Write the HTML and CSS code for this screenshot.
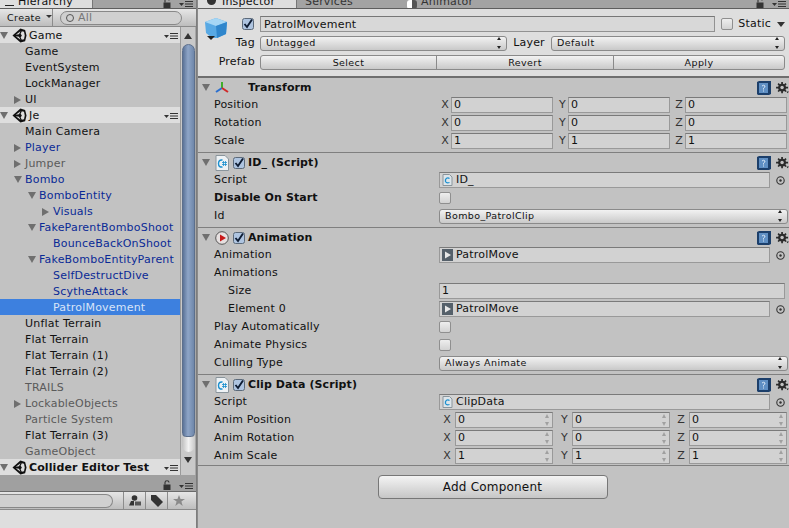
FILE: index.html
```html
<!DOCTYPE html>
<html lang="en">
<head>
<meta charset="utf-8">
<title>Unity Inspector</title>
<link rel="stylesheet" href="styles.css">
</head>
<body>
<svg class="defs" width="0" height="0">
  <defs>
    <symbol id="unity" viewBox="0 0 16 16">
      <path d="M9 .5 14 2 15.500 8 14 14 9 15.500 .5 8ZM4 7.200 9 3.500 7.500 6.700ZM4 8.800 7.500 9.300 9 12.500ZM9.200 6 10.500 3.500 12.800 4 13.600 8 12.800 12 10.500 12.500 9.200 10 10.500 8Z" fill="#111" fill-rule="evenodd"/>
    </symbol>
    <symbol id="menu" viewBox="0 0 14 8">
      <path d="M0 3h5L2.500 6Z" fill="#333"/><path d="M6 1h8v1H6zM6 3.500h8v1H6zM6 6h8v1H6z" fill="#333"/>
    </symbol>
    <symbol id="help" viewBox="0 0 14 14">
      <path d="M0 1 2 0h12v13l-2 1H1l-1-1Z" fill="#1c3f6b"/><path d="M2 2h9v10H2Z" fill="#5f8fc4"/><path d="M5 5Q6.500 3.500 8 5 8 6.500 6.500 7.200v1.300M6.500 9.500v1" stroke="#d8e6f5" fill="none"/>
    </symbol>
    <symbol id="gear" viewBox="0 0 15 14">
      <path d="M6 0h2v2l1.500.6L11 1.200 12.300 2.500 11 4l.6 1.500H14v2h-2.400L11 9l1.300 1.500L11 11.800 9.500 10.500 8 11v2H6v-2l-1.500-.5L3 11.800 1.700 10.500 3 9l-.6-1.500H0v-2h2.400L3 4 1.700 2.500 3 1.200 4.500 2.600 6 2Z" fill="#2a2a2a"/><circle cx="7" cy="6.500" r="2" fill="#c2c2c2"/><path d="M12 11h3l-1.500 2Z" fill="#2a2a2a"/>
    </symbol>
    <symbol id="cs" viewBox="0 0 14 16">
      <path d="M1 .5h9l3.500 3.500v11.500H1Z" fill="#eef2f5" stroke="#8a959c"/><path d="M7.500 5Q3.500 4.500 3.500 8.500 3.500 12.500 7.500 12" fill="none" stroke="#1b8fce" stroke-width="1.400"/><path d="M7 7.500h5M7 9.500h5M8.500 6v5M10.500 6v5" stroke="#1b8fce" stroke-width=".8"/>
    </symbol>
    <symbol id="cs-small" viewBox="0 0 11 12">
      <path d="M1 .5h6.500L10 3v8.500H1Z" fill="#dde5ea" stroke="#8a959c"/><path d="M7.500 4.500Q6 3.500 4.500 4.300 3 5.500 3.500 7.500 4.500 9.500 7.500 8.500" fill="none" stroke="#1b8fce" stroke-width="1.300"/>
    </symbol>
    <symbol id="clip" viewBox="0 0 11 12">
      <path d="M0 0h11v12H0Z" fill="#55606a"/><path d="M3 2.500 9 6 3 9.500Z" fill="#e8e8e8"/>
    </symbol>
    <symbol id="target" viewBox="0 0 9 9">
      <circle cx="4.500" cy="4.500" r="3.700" fill="none" stroke="#333" stroke-width="1.100"/><circle cx="4.500" cy="4.500" r="1.200" fill="#333"/>
    </symbol>
    <symbol id="lock" viewBox="0 0 8 10">
      <path d="M.5 4.500h7V10h-7Z" fill="#333"/><path d="M2 4.500V2.500Q2 .7 4 .7 6 .7 6 2.500" fill="none" stroke="#333" stroke-width="1.100"/>
    </symbol>
    <symbol id="check" viewBox="0 0 12 12">
      <rect x=".5" y=".5" width="11" height="11" rx="2" fill="#aec4e0" stroke="#5c6a7a"/><path d="M2.500 6 5 9 10 1.500" fill="none" stroke="#0e1c33" stroke-width="1.900"/>
    </symbol>
  </defs>
</svg>

<div class="app">
  <aside class="left">
    <div class="tabbar">
      <div class="tab tab-hier"><span class="list-ic"></span><span>Hierarchy</span></div>
      <div class="tab-tools"><svg class="ic-lock"><use href="#lock"/></svg><svg class="ic-menu"><use href="#menu"/></svg></div>
    </div>
    <div class="toolbar">
      <div class="create">Create <span class="caret"></span></div>
      <div class="search"><span class="lens"></span><span class="search-hint">All</span></div>
    </div>
    <div class="hier">
      <div class="tree">
        <div class="scene"><span class="arr down"></span><svg class="ic-unity"><use href="#unity"/></svg><span class="grow">Game</span><svg class="ic-menu"><use href="#menu"/></svg></div>
        <div class="row d0"><span class="slot"></span>Game</div>
        <div class="row d0"><span class="slot"></span>EventSystem</div>
        <div class="row d0"><span class="slot"></span>LockManager</div>
        <div class="row d0"><span class="slot"><span class="arr"></span></span>UI</div>
        <div class="scene"><span class="arr down"></span><svg class="ic-unity"><use href="#unity"/></svg><span class="grow">Je</span><svg class="ic-menu"><use href="#menu"/></svg></div>
        <div class="row d0"><span class="slot"></span>Main Camera</div>
        <div class="row d0 pre"><span class="slot"><span class="arr"></span></span>Player</div>
        <div class="row d0 off"><span class="slot"><span class="arr"></span></span>Jumper</div>
        <div class="row d0 pre"><span class="slot"><span class="arr down"></span></span>Bombo</div>
        <div class="row d1 pre"><span class="slot"><span class="arr down"></span></span>BomboEntity</div>
        <div class="row d2 pre"><span class="slot"><span class="arr"></span></span>Visuals</div>
        <div class="row d1 pre"><span class="slot"><span class="arr down"></span></span>FakeParentBomboShoot</div>
        <div class="row d2 pre"><span class="slot"></span>BounceBackOnShoot</div>
        <div class="row d1 pre"><span class="slot"><span class="arr down"></span></span>FakeBomboEntityParent</div>
        <div class="row d2 pre"><span class="slot"></span>SelfDestructDive</div>
        <div class="row d2 pre"><span class="slot"></span>ScytheAttack</div>
        <div class="row d2 sel"><span class="slot"></span>PatrolMovement</div>
        <div class="row d0"><span class="slot"></span>Unflat Terrain</div>
        <div class="row d0"><span class="slot"></span>Flat Terrain</div>
        <div class="row d0"><span class="slot"></span>Flat Terrain (1)</div>
        <div class="row d0"><span class="slot"></span>Flat Terrain (2)</div>
        <div class="row d0 off"><span class="slot"></span>TRAILS</div>
        <div class="row d0 off"><span class="slot"><span class="arr"></span></span>LockableObjects</div>
        <div class="row d0 off"><span class="slot"></span>Particle System</div>
        <div class="row d0"><span class="slot"></span>Flat Terrain (3)</div>
        <div class="row d0 off"><span class="slot"></span>GameObject</div>
        <div class="scene strong"><span class="arr down"></span><svg class="ic-unity"><use href="#unity"/></svg><span class="grow">Collider Editor Test</span><svg class="ic-menu"><use href="#menu"/></svg></div>
      </div>
      <div class="scroll">
        <span class="sc-up"></span>
        <div class="thumb"></div>
        <div class="thumb-end"></div>
        <span class="sc-down"></span>
      </div>
    </div>
    <div class="tabbar tabbar-low">
      <div class="tab-tools"><svg class="ic-lock"><use href="#lock"/></svg><svg class="ic-menu"><use href="#menu"/></svg></div>
    </div>
    <div class="toolbar toolbar-low">
      <div class="search search-low"></div>
      <div class="tool-btn"><svg width="12" height="11" viewBox="0 0 12 11"><circle cx="5.500" cy="3" r="2.800" fill="#333"/><path d="M0 10.500 2 6h3v4.500Z" fill="#333"/><rect x="6" y="6.500" width="6" height="4" fill="#555"/></svg></div>
      <div class="tool-btn"><svg width="12" height="12" viewBox="0 0 12 12"><path d="M0 0h5l7 7-5 5-7-7Z" fill="#333"/></svg></div>
      <div class="tool-btn"><svg width="12" height="11" viewBox="0 0 12 11"><path d="M6 0 7.500 4H12L8.400 6.500 9.700 11 6 8.200 2.300 11 3.600 6.500 0 4H4.500Z" fill="#8a8a8a"/></svg></div>
    </div>
    <div class="left-foot"></div>
  </aside>

  <main class="right">
    <div class="tabbar">
      <div class="tab tab-insp"><span class="info-ic"></span><span>Inspector</span></div>
      <div class="tab tab-serv"><span>Services</span></div>
      <div class="tab tab-anim"><span class="anim-ic"></span><span>Animator</span></div>
      <div class="tab-tools"><svg class="ic-lock"><use href="#lock"/></svg><svg class="ic-menu"><use href="#menu"/></svg></div>
    </div>

    <header class="obj">
      <svg class="cube" width="24" height="24" viewBox="0 0 24 24">
        <path d="M1 5 12 1 23 5 22 17 13 21 8 21 2 16Z" fill="#58a9e4"/>
        <path d="M1 5 12 1 23 5 12 9Z" fill="#a5d6f5"/>
        <path d="M12 9 23 5 22 17 13 21Z" fill="#2f86cc"/>
        <path d="M3 19h8l-4 4Z" fill="#222"/>
      </svg>
      <div class="obj-rows">
        <div class="obj-row">
          <svg class="cb"><use href="#check"/></svg>
          <div class="name-field">PatrolMovement</div>
          <span class="box static-box"></span>
          <span class="static">Static</span>
          <span class="static-arr"></span>
        </div>
        <div class="obj-row">
          <span class="obj-lab">Tag</span>
          <div class="popup tag-pop">Untagged<span class="updown"></span></div>
          <span class="layer-lab">Layer</span>
          <div class="popup layer-pop">Default<span class="updown"></span></div>
        </div>
        <div class="obj-row">
          <span class="obj-lab">Prefab</span>
          <div class="btn-group">
            <div class="seg seg-a">Select</div>
            <div class="seg seg-b">Revert</div>
            <div class="seg seg-c">Apply</div>
          </div>
        </div>
      </div>
    </header>

    <section class="comp">
      <div class="comp-head">
        <span class="arr down"></span>
        <svg class="comp-ic" width="14" height="14" viewBox="0 0 14 14"><path d="M7 7V1" stroke="#3fae2a" stroke-width="2"/><path d="M7 7 1 11" stroke="#2a6fd0" stroke-width="2"/><path d="M7 7l6 4" stroke="#d02a2a" stroke-width="2"/></svg>
        <span class="comp-title tf-title">Transform</span>
        <svg class="ic-help"><use href="#help"/></svg><svg class="ic-gear"><use href="#gear"/></svg>
      </div>
      <div class="prop"><span class="lab">Position</span><div class="vec"><span class="ax">X</span><span class="fld">0</span><span class="ax">Y</span><span class="fld">0</span><span class="ax">Z</span><span class="fld">0</span></div></div>
      <div class="prop"><span class="lab">Rotation</span><div class="vec"><span class="ax">X</span><span class="fld">0</span><span class="ax">Y</span><span class="fld">0</span><span class="ax">Z</span><span class="fld">0</span></div></div>
      <div class="prop"><span class="lab">Scale</span><div class="vec"><span class="ax">X</span><span class="fld">1</span><span class="ax">Y</span><span class="fld">1</span><span class="ax">Z</span><span class="fld">1</span></div></div>
    </section>

    <section class="comp">
      <div class="comp-head">
        <span class="arr down"></span>
        <svg class="comp-ic" width="14" height="16"><use href="#cs"/></svg>
        <svg class="cb"><use href="#check"/></svg>
        <span class="comp-title">ID_ (Script)</span>
        <svg class="ic-help"><use href="#help"/></svg><svg class="ic-gear"><use href="#gear"/></svg>
      </div>
      <div class="prop"><span class="lab">Script</span><div class="obj-field"><svg class="ref-ic"><use href="#cs-small"/></svg>ID_</div><svg class="ic-target"><use href="#target"/></svg></div>
      <div class="prop"><span class="lab bold">Disable On Start</span><span class="box"></span></div>
      <div class="prop"><span class="lab">Id</span><div class="popup wide-pop">Bombo_PatrolClip<span class="updown"></span></div></div>
    </section>

    <section class="comp">
      <div class="comp-head">
        <span class="arr down"></span>
        <svg class="comp-ic" width="14" height="14" viewBox="0 0 14 14"><circle cx="7" cy="7" r="6.300" fill="#e6e0e0" stroke="#555"/><path d="M5 3.500 11 7 5 10.500Z" fill="#c81818"/></svg>
        <svg class="cb"><use href="#check"/></svg>
        <span class="comp-title">Animation</span>
        <svg class="ic-help"><use href="#help"/></svg><svg class="ic-gear"><use href="#gear"/></svg>
      </div>
      <div class="prop"><span class="lab">Animation</span><div class="obj-field"><svg class="ref-ic"><use href="#clip"/></svg>PatrolMove</div><svg class="ic-target"><use href="#target"/></svg></div>
      <div class="prop"><span class="lab">Animations</span></div>
      <div class="prop"><span class="lab sub">Size</span><div class="plain-field">1</div></div>
      <div class="prop"><span class="lab sub">Element 0</span><div class="obj-field"><svg class="ref-ic"><use href="#clip"/></svg>PatrolMove</div><svg class="ic-target"><use href="#target"/></svg></div>
      <div class="prop"><span class="lab">Play Automatically</span><span class="box"></span></div>
      <div class="prop"><span class="lab">Animate Physics</span><span class="box"></span></div>
      <div class="prop"><span class="lab">Culling Type</span><div class="popup wide-pop">Always Animate<span class="updown"></span></div></div>
    </section>

    <section class="comp comp-last">
      <div class="comp-head">
        <span class="arr down"></span>
        <svg class="comp-ic" width="14" height="16"><use href="#cs"/></svg>
        <svg class="cb"><use href="#check"/></svg>
        <span class="comp-title">Clip Data (Script)</span>
        <svg class="ic-help"><use href="#help"/></svg><svg class="ic-gear"><use href="#gear"/></svg>
      </div>
      <div class="prop"><span class="lab">Script</span><div class="obj-field"><svg class="ref-ic"><use href="#cs-small"/></svg>ClipData</div><svg class="ic-target"><use href="#target"/></svg></div>
      <div class="prop"><span class="lab">Anim Position</span><div class="vec spin"><span class="ax">X</span><span class="fld">0<i class="spinner"></i></span><span class="ax">Y</span><span class="fld">0<i class="spinner"></i></span><span class="ax">Z</span><span class="fld">0<i class="spinner"></i></span></div></div>
      <div class="prop"><span class="lab">Anim Rotation</span><div class="vec spin"><span class="ax">X</span><span class="fld">0<i class="spinner"></i></span><span class="ax">Y</span><span class="fld">0<i class="spinner"></i></span><span class="ax">Z</span><span class="fld">0<i class="spinner"></i></span></div></div>
      <div class="prop"><span class="lab">Anim Scale</span><div class="vec spin"><span class="ax">X</span><span class="fld">1<i class="spinner"></i></span><span class="ax">Y</span><span class="fld">1<i class="spinner"></i></span><span class="ax">Z</span><span class="fld">1<i class="spinner"></i></span></div></div>
    </section>

    <div class="add-area"><div class="add-btn">Add Component</div></div>
  </main>
</div>
</body>
</html>
```

FILE: styles.css
```css
* { box-sizing: border-box; }
html, body { margin: 0; height: 100%; overflow: hidden; }
body {
  font: 11px/16px "DejaVu Sans", "Liberation Sans", sans-serif;
  letter-spacing: .2px;
  color: #111;
  background: #c2c2c2;
}
svg { display: block; flex: none; }
.defs { position: absolute; }
.app { display: flex; height: 528px; }

/* panels */
.left { width: 197px; flex: none; display: flex; flex-direction: column; border-right: 1px solid #7d7d7d; }
.right { flex: 1; min-width: 0; display: flex; flex-direction: column; border-left: 1px solid #8a8a8a; background: #c2c2c2; }

/* tab bars */
.tabbar { height: 9px; flex: none; display: flex; align-items: flex-end; background: #a3a3a3; border-bottom: 1px solid #5e5e5e; overflow: hidden; }
.tab { height: 20px; flex: none; display: flex; align-items: center; padding-top: 2px; margin-bottom: -1px; color: #333; font-size: 11px; }
.tab > span:last-child { position: relative; top: 2px; }
.tab-hier { width: 93px; padding-left: 5px; gap: 4px; background: #dedede; border-right: 1px solid #777; color: #111; }
.tab-insp { width: 99px; padding-left: 9px; gap: 6px; background: #dedede; border-right: 1px solid #777; color: #111; }
.tab-serv { width: 110px; padding-left: 8px; }
.tab-anim { gap: 4px; }
.list-ic { width: 9px; height: 9px; position: relative; top: 1px; border-top: 1px solid #222; border-bottom: 1px solid #222; }
.info-ic { width: 9px; height: 9px; position: relative; top: 0; border-radius: 50%; background: #333; }
.anim-ic { width: 10px; height: 9px; position: relative; top: 4px; border-left: 5px solid #fff; background: #555; border-radius: 3px; }
.tab-tools { margin-left: auto; display: flex; align-items: flex-end; gap: 8px; padding-right: 3px; height: 100%; }
.ic-lock { width: 8px; height: 10px; }
.ic-menu { width: 14px; height: 8px; }
.tabbar-low { height: 17px; background: #a0a0a0; border-bottom: 1px solid #6a6a6a; }
.tabbar-low .tab-tools { padding-bottom: 1px; }

/* toolbars */
.toolbar { height: 18px; flex: none; display: flex; align-items: center; background: linear-gradient(#e6e6e6, #bdbdbd); border-bottom: 1px solid #8a8a8a; }
.create { width: 53px; height: 100%; flex: none; padding-left: 7px; border-right: 1px solid #8c8c8c; line-height: 17px; font-size: 9.500px; letter-spacing: .4px; white-space: nowrap; }
.caret { display: inline-block; margin: 0 0 3px 2px; border: 3px solid transparent; border-top-color: #333; border-bottom: 0; }
.search { width: 122px; height: 14px; margin-left: 7px; display: flex; align-items: center; padding-left: 5px; border: 1px solid #888; border-radius: 8px; background: #d0d0d0; color: #777; }
.lens { width: 8px; height: 8px; border: 1px solid #555; border-radius: 50%; margin-right: 4px; }
.search-hint { font-size: 11px; }
.search-low { width: 113px; margin-left: 0; border-left: 0; border-radius: 0 8px 8px 0; }
.tool-btn { width: 22px; height: 100%; flex: none; display: flex; align-items: center; justify-content: center; border-left: 1px solid #8c8c8c; }
.search-low + .tool-btn { margin-left: 10px; }
.left-foot { flex: 1; background: #dedede; }

/* hierarchy */
.hier { height: 448px; flex: none; display: flex; overflow: hidden; }
.tree { width: 180px; flex: none; }
.row { height: 16px; display: flex; align-items: center; padding-top: 1px; white-space: nowrap; }
.d0 { padding-left: 11px; }
.d1 { padding-left: 25px; }
.d2 { padding-left: 39px; }
.slot { width: 14px; height: 15px; flex: none; display: flex; align-items: center; padding-left: 3px; }
.pre { color: #0a2a96; }
.off { color: #5a5a5a; }
.sel { background: #3d80df; color: #d8e4f8; }
.arr { display: block; flex: none; width: 0; height: 0; border-style: solid; border-width: 4px 0 4px 7px; border-color: transparent transparent transparent #6f6f6f; }
.arr.down { border-width: 7px 4px 0 4px; border-color: #6f6f6f transparent transparent transparent; }
.scene { height: 16px; display: flex; align-items: center; padding-top: 1px; background: #dedede; padding-right: 2px; white-space: nowrap; }
.ic-unity { width: 15px; height: 15px; margin: -1px 2px 0 4px; }
.grow { flex: 1; min-width: 0; }
.strong { font-weight: 700; letter-spacing: .1px; }

/* scrollbar */
.scroll { width: 16px; flex: none; display: flex; flex-direction: column; align-items: center; background: #c9c9c9; border-left: 1px solid #9a9a9a; border-right: 1px solid #a8a8a8; }
.sc-up { margin: 6px 0 5px; border: 4px solid transparent; border-top: 0; border-bottom: 6px solid #333; }
.sc-down { margin-top: 5px; border: 4px solid transparent; border-bottom: 0; border-top: 6px solid #333; }
.thumb { width: 13px; height: 393px; flex: none; border-radius: 7px 7px 4px 4px; background: linear-gradient(90deg, #5b7398, #8ea5c7 45%, #6f87aa); border: 1px solid #5c6f8c; }
.thumb-end { width: 13px; height: 15px; flex: none; border-radius: 0 0 7px 7px; background: linear-gradient(90deg, #c0c0c0, #f2f2f2 50%, #c8c8c8); }

/* object header */
.obj { height: 69px; flex: none; display: flex; background: #dedede; border-bottom: 2px solid #6e6e6e; padding: 7px 4px 0 6px; }
.cube { margin-top: 1px; }
.obj-rows { flex: 1; min-width: 0; margin-left: -18px; display: flex; flex-direction: column; gap: 3px; }
.obj-row { height: 16px; display: flex; align-items: center; }
.cb { width: 12px; height: 12px; }
.obj-row > .cb { margin-left: 32px; }
.name-field { width: 457px; height: 16px; margin-left: 6px; padding-left: 3px; background: #d8d8d8; border: 1px solid #929292; border-top-color: #777; }
.box { width: 12px; height: 12px; flex: none; border: 1px solid #8f8f8f; border-radius: 2px; background: linear-gradient(#eee, #d2d2d2); }
.static-box { margin-left: 6px; }
.static { margin-left: 5px; }
.static-arr { margin-left: 6px; border: 4px solid transparent; border-bottom: 0; border-top: 5px solid #333; }
.obj-lab { width: 44px; text-align: right; margin-left: 1px; margin-right: 5px; flex: none; }
.popup { height: 15px; display: flex; align-items: center; justify-content: space-between; padding: 0 4px 0 5px; border: 1px solid #8a8a8a; border-radius: 3px; background: linear-gradient(#f2f2f2, #c9c9c9); font-size: 9.500px; letter-spacing: .4px; }
.updown { width: 5px; height: 8px; flex: none; position: relative; }
.updown::before, .updown::after { content: ""; position: absolute; left: 0; border: 2.500px solid transparent; }
.updown::before { top: -2px; border-top: 0; border-bottom: 3px solid #222; }
.updown::after { bottom: -2px; border-bottom: 0; border-top: 3px solid #222; }
.tag-pop { width: 247px; }
.layer-lab { width: 44px; flex: none; text-align: center; }
.layer-pop { width: 234px; }
.btn-group { width: 525px; height: 15px; display: flex; border: 1px solid #8a8a8a; border-radius: 3px; background: linear-gradient(#f2f2f2, #c9c9c9); font-size: 9.500px; letter-spacing: .4px; line-height: 13px; text-align: center; }
.seg-a { width: 176px; border-right: 1px solid #8a8a8a; }
.seg-b { width: 177px; border-right: 1px solid #8a8a8a; }
.seg-c { flex: 1; }

/* components */
.comp { flex: none; padding-bottom: 2px; padding-left: 4px; border-bottom: 1px solid #7f7f7f; }
.comp-last { padding-bottom: 0; }
.comp-head { height: 18px; display: flex; align-items: center; padding-top: 1px; }
.comp-ic { margin-left: 5px; }
.comp-head .cb { margin-left: 4px; }
.comp-title { flex: 1; min-width: 0; margin-left: 3px; font-weight: 700; letter-spacing: .1px; }
.tf-title { margin-left: 19px; }
.ic-help { width: 14px; height: 14px; margin-right: 1px; }
.ic-gear { width: 13px; height: 12px; margin-left: 4px; }
.prop { height: 18px; display: flex; align-items: center; padding-left: 12px; }
.lab { width: 225px; flex: none; white-space: nowrap; }
.lab.sub { padding-left: 14px; }
.bold { font-weight: 700; letter-spacing: .1px; }
.obj-field { width: 331px; height: 16px; flex: none; display: flex; align-items: center; padding-left: 2px; gap: 3px; background: #d2d2d2; border: 1px solid #999; border-top-color: #7a7a7a; }
.plain-field { width: 346px; height: 16px; flex: none; padding-left: 2px; line-height: 14px; background: #d2d2d2; border: 1px solid #999; border-top-color: #7a7a7a; }
.ref-ic { width: 11px; height: 12px; }
.ic-target { width: 9px; height: 9px; margin-left: 6px; }
.wide-pop { width: 349px; }
.vec { width: 348px; display: grid; grid-template-columns: 12px 1fr 15px 1fr 15px 1fr; align-items: center; }
.ax { text-align: right; padding-right: 2px; color: #333; }
.fld { height: 16px; min-width: 0; position: relative; padding-left: 2px; line-height: 14px; background: #d2d2d2; border: 1px solid #999; border-top-color: #7a7a7a; }
.spin { grid-template-columns: 16px 1fr 19px 1fr 19px 1fr; }
.spin .ax { padding-right: 4px; }
.spinner { position: absolute; right: 2px; top: 2px; width: 5px; height: 10px; }
.spinner::before, .spinner::after { content: ""; position: absolute; left: 0; border: 2.500px solid transparent; }
.spinner::before { top: -1px; border-top: 0; border-bottom: 4px solid #a0a0a0; }
.spinner::after { bottom: -1px; border-bottom: 0; border-top: 4px solid #a0a0a0; }

/* add component */
.add-area { flex: 1; display: flex; justify-content: center; padding-top: 9px; padding-right: 2px; }
.add-btn { width: 230px; height: 24px; font-size: 12px; line-height: 22px; text-align: center; border: 1px solid #777; border-radius: 4px; background: linear-gradient(#f4f4f4, #c6c6c6); }
```
